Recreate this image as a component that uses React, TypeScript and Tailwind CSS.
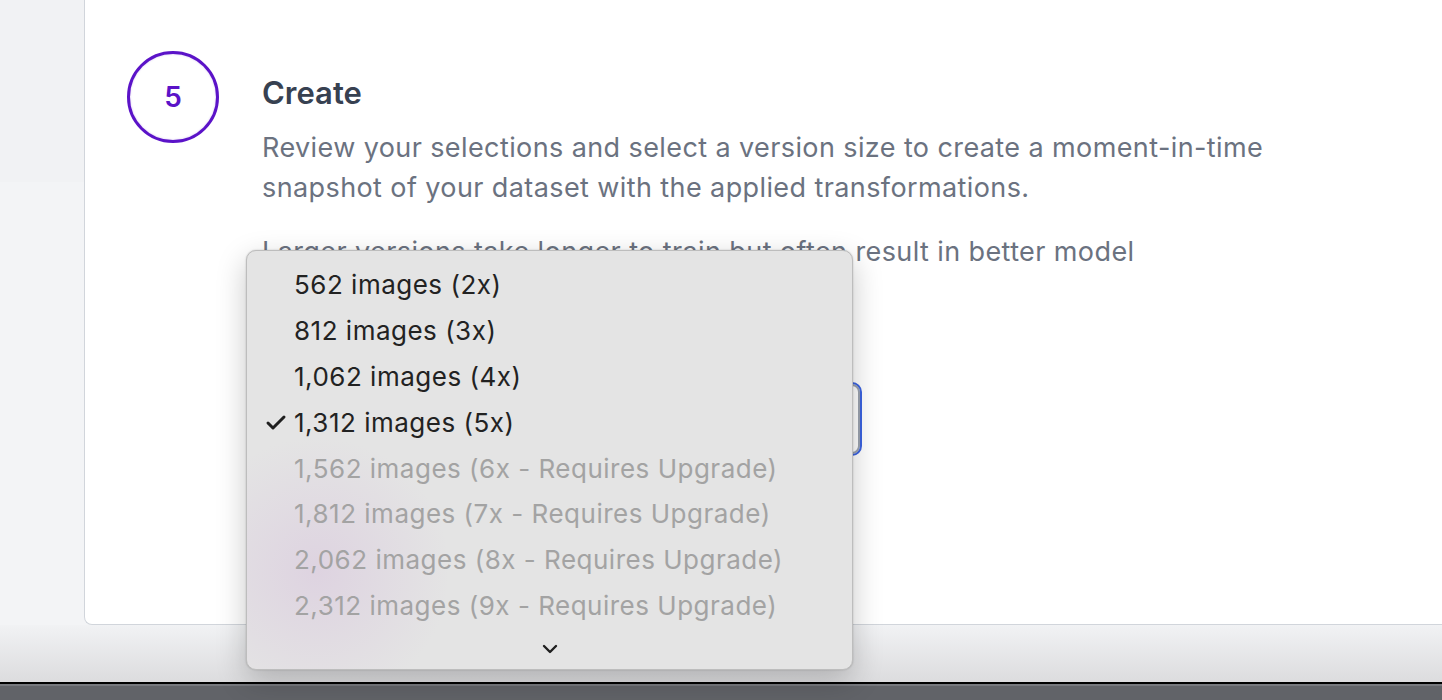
import { Check, ChevronDown } from 'lucide-react';

const options = [
  { label: '562 images (2x)', disabled: false, selected: false },
  { label: '812 images (3x)', disabled: false, selected: false },
  { label: '1,062 images (4x)', disabled: false, selected: false },
  { label: '1,312 images (5x)', disabled: false, selected: true },
  { label: '1,562 images (6x - Requires Upgrade)', disabled: true, selected: false },
  { label: '1,812 images (7x - Requires Upgrade)', disabled: true, selected: false },
  { label: '2,062 images (8x - Requires Upgrade)', disabled: true, selected: false },
  { label: '2,312 images (9x - Requires Upgrade)', disabled: true, selected: false },
];

export default function App() {
  return (
    <div
      className="relative flex h-[700px] w-[1442px] flex-col overflow-hidden bg-[#f3f4f6]"
      style={{ fontFamily: 'Inter, "Noto Sans", sans-serif' }}
    >
      <div className="flex h-[682px] flex-col">
        <div className="flex h-[625px]">
          <div className="flex w-[84px] flex-col">
            <div className="h-[182px] bg-[#f1f2f4]" />
            <div className="flex-1 bg-[#f3f4f6]" />
          </div>
          <div className="flex flex-1 rounded-bl-lg border-b border-l border-[#d1d5db] bg-white pl-[42px] pt-[51px]">
            <div className="flex h-[92px] w-[92px] shrink-0 items-center justify-center rounded-full border-[3px] border-[#5b13c8] text-[28px] font-semibold text-[#5b13c8] shadow-[inset_0_0_2px_rgba(91,19,200,0.25)]">
              5
            </div>
            <div className="ml-[43px] flex flex-col pt-[22px]">
              <h2 className="text-[31px] font-semibold leading-[40px] text-[#374151]">Create</h2>
              <p className="mt-[15px] w-[1030px] text-[27px] leading-[40px] tracking-[0.4px] text-[#6b7280]">
                Review your selections and select a version size to create a moment-in-time snapshot of your dataset with the applied transformations.
              </p>
              <p className="mt-[24px] w-[960px] text-[27px] leading-[40px] tracking-[0.4px] text-[#6b7280]">
                Larger versions take longer to train but often result in better model performance.
              </p>
              <div className="mt-[70px] flex h-[74px] w-[600px] items-center rounded-[10px] border-2 border-[#3b63e0] px-4 text-[24px] text-[#374151] shadow-[inset_0_0_0_2px_#9ca3af]">
                1,312 images (5x)
              </div>
            </div>
          </div>
        </div>
        <div className="flex-1 bg-gradient-to-b from-[#f1f2f4] to-[#dcdcde]" />
      </div>
      <div className="h-[2px] bg-black" />
      <div className="h-[2px] bg-[#77797e]" />
      <div className="flex-1 bg-[#616368]" />

      <div className="absolute left-[246px] top-[250px] flex h-[420px] w-[607px] flex-col overflow-hidden rounded-[10px] border border-[#bdbdbd] bg-[#e4e4e4] pt-[11px] shadow-[0_10px_30px_rgba(0,0,0,0.22),0_0_2px_rgba(0,0,0,0.2)]">
        <div className="pointer-events-none absolute left-[-60px] top-[180px] h-[280px] w-[260px] rounded-full bg-[radial-gradient(circle,rgba(214,190,220,0.45),rgba(228,228,228,0)_70%)]" />
        {options.map((o) => (
          <div key={o.label} className="relative flex h-[46px] items-center">
            <div className="flex w-[47px] justify-end pr-[6px]">
              {o.selected && <Check className="h-[24px] w-[24px] text-[#1f1f1f]" strokeWidth={3} />}
            </div>
            <span
              className={`text-[26px] leading-none tracking-[0.5px] ${o.disabled ? 'text-[#a3a3a3]' : 'text-[#222222]'}`}
            >
              {o.label}
            </span>
          </div>
        ))}
        <div className="relative flex h-[40px] items-center justify-center">
          <ChevronDown className="h-[24px] w-[24px] text-[#1f1f1f]" strokeWidth={2.4} />
        </div>
      </div>
    </div>
  );
}
